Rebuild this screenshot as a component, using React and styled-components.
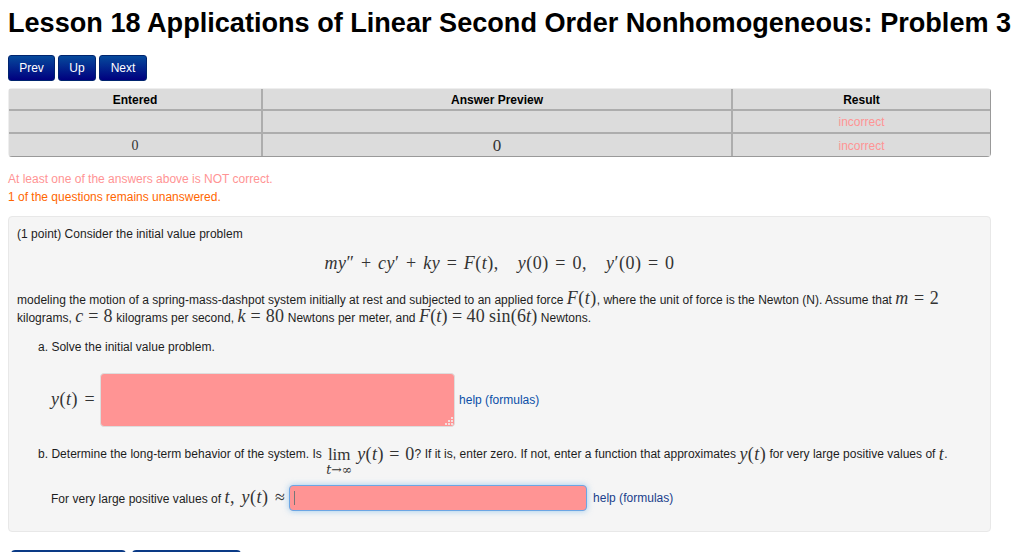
import React from 'react'
import styled, { createGlobalStyle } from 'styled-components'

const GlobalStyle = createGlobalStyle`
  html, body {
    margin: 0;
    padding: 0;
    background: #fff;
    height: 552px;
    overflow: hidden;
  }
  body {
    font-family: "Liberation Sans", Arial, sans-serif;
    font-size: 12px;
    color: #333;
  }
`

const Page = styled.div`
  width: 983px;
  margin-left: 8px;
`

const Title = styled.h1`
  margin: 0;
  padding-top: 7px;
  height: 55px;
  box-sizing: border-box;
  font-size: 27.1px;
  line-height: 32px;
  font-weight: bold;
  color: #000;
  white-space: nowrap;
`

const NavBar = styled.div`
  display: flex;
  gap: 3px;
  height: 33px;
`

const NavButton = styled.a`
  box-sizing: border-box;
  height: 26px;
  width: ${p => p.$w}px;
  display: flex;
  align-items: center;
  justify-content: center;
  border-radius: 3px;
  border: 1px solid #00246e;
  background: linear-gradient(#064a9c, #00007f);
  color: #fff;
  font-size: 12px;
`

const ResultTable = styled.table`
  width: 983px;
  table-layout: fixed;
  border-collapse: separate;
  border-spacing: 0;
  border: 1px solid #eee;
  border-right: 1px solid #999;
  border-bottom: 1px solid #999;
  border-radius: 4px;
  font-size: 12px;
`

const Cell = styled.td`
  height: 23px;
  padding: 1px 0 0 0;
  box-sizing: border-box;
  background: #dcdcdc;
  border: 0 solid #adadad;
  border-width: 0 2px 2px 0;
  text-align: center;
  color: ${p => (p.$bad ? '#ff9494' : '#000')};
  font-weight: ${p => (p.$head ? 'bold' : 'normal')};
  &:last-child { border-right-width: 0; }
  tr:first-child & { height: 22px; }
  tr:last-child & { height: 22px; border-bottom-width: 0; }
`

const SerifZero = styled.span`
  font-family: "Liberation Serif", serif;
  font-size: ${p => p.$size || 14}px;
  color: #333;
`

const Messages = styled.div`
  margin-top: 13px;
  height: 46px;
  line-height: 18px;
`

const Wrong = styled.div`
  color: #ff9494;
`

const Unanswered = styled.div`
  color: #f60;
`

const Problem = styled.div`
  box-sizing: border-box;
  width: 983px;
  height: 316px;
  padding: 8px 8px 0 8px;
  background: #f5f5f5;
  border: 1px solid #e8e8e8;
  border-radius: 4px;
  color: #1d1d1d;
  font-size: 12px;
  line-height: 17px;
  letter-spacing: 0.02px;
`

const DisplayEq = styled.div`
  height: 51px;
  display: flex;
  align-items: center;
  justify-content: center;
  gap: 19px;
`

const Para = styled.div`
  height: ${p => p.$h || 18}px;
  line-height: 18px;
  white-space: nowrap;
`

const Indented = styled.div`
  margin-left: 21px;
  margin-top: ${p => p.$top || 0}px;
  display: flex;
  align-items: center;
  white-space: nowrap;
`

const M = styled.span`
  font-family: "Liberation Serif", "DejaVu Serif", serif;
  font-size: ${p => p.$size || 18}px;
  letter-spacing: ${p => p.$track ?? 0.5}px;
  word-spacing: ${p => p.$word ?? 1.5}px;
  color: #333;
  white-space: nowrap;
`

const I = styled.i`
  font-style: italic;
`

const RowLabel = styled.div`
  margin-left: 13px;
  width: ${p => p.$w}px;
  flex: none;
`

const AnswerArea = styled.textarea`
  box-sizing: border-box;
  width: 355px;
  height: 54px;
  margin: 0;
  padding: 0;
  background: #ff9494;
  border: 1px solid #ddd;
  border-radius: 4px;
  outline: none;
  resize: none;
  display: block;
`

const AnswerWrap = styled.span`
  position: relative;
  display: block;
  margin-right: ${p => p.$gap}px;
`

const Grip = styled.svg`
  position: absolute;
  right: 2px;
  bottom: 2px;
  width: 9px;
  height: 9px;
`

const AnswerInput = styled.input`
  box-sizing: border-box;
  display: block;
  width: 298px;
  height: 26px;
  padding: 0;
  background: #ff9494;
  border: 1px solid #6ba6e4;
  border-radius: 4px;
  outline: none;
  box-shadow: 0 0 6px rgba(102, 175, 233, 0.6);
`

const Caret = styled.span`
  position: absolute;
  left: 5px;
  top: 6px;
  width: 1px;
  height: 14px;
  background: #777;
`

const HelpLink = styled.a`
  color: ${p => (p.$dark ? '#1a3e8c' : '#0b4fa8')};
  font-size: 12px;
`

const Limit = styled.span`
  position: relative;
  display: inline-flex;
  justify-content: center;
  width: 28px;
  margin: 0 4px 0 0;
`

const LimSub = styled.span`
  position: absolute;
  top: 19px;
  font-family: "DejaVu Serif", serif;
  font-size: 12.5px;
  line-height: 10px;
  color: #333;
  white-space: nowrap;
`

const SubmitRow = styled.div`
  display: flex;
  gap: 6px;
  margin: 18px 0 0 3px;
`

const SubmitButton = styled.div`
  width: ${p => p.$w}px;
  height: 26px;
  border-radius: 4px;
  background: #0a3a86;
`

export default function App() {
  return (
    <Page>
      <GlobalStyle />
      <Title>Lesson 18 Applications of Linear Second Order Nonhomogeneous: Problem 3</Title>
      <NavBar>
        <NavButton $w={47}>Prev</NavButton>
        <NavButton $w={38}>Up</NavButton>
        <NavButton $w={48}>Next</NavButton>
      </NavBar>
      <ResultTable>
        <colgroup>
          <col style={{ width: 254 }} />
          <col style={{ width: 470 }} />
          <col />
        </colgroup>
        <tbody>
          <tr>
            <Cell $head>Entered</Cell>
            <Cell $head>Answer Preview</Cell>
            <Cell $head>Result</Cell>
          </tr>
          <tr>
            <Cell />
            <Cell />
            <Cell $bad>incorrect</Cell>
          </tr>
          <tr>
            <Cell><SerifZero>0</SerifZero></Cell>
            <Cell><SerifZero $size={17}>0</SerifZero></Cell>
            <Cell $bad>incorrect</Cell>
          </tr>
        </tbody>
      </ResultTable>
      <Messages>
        <Wrong>At least one of the answers above is NOT correct.</Wrong>
        <Unanswered>1 of the questions remains unanswered.</Unanswered>
      </Messages>
      <Problem>
        <Para $h={13}>(1 point) Consider the initial value problem</Para>
        <DisplayEq>
          <M><I>my</I>″ + <I>cy</I>′ + <I>ky</I> = <I>F</I>(<I>t</I>),</M>
          <M><I>y</I>(0) = 0,</M>
          <M><I>y</I>′(0) = 0</M>
        </DisplayEq>
        <Para>
          modeling the motion of a spring-mass-dashpot system initially at rest and subjected to an applied force <M><I>F</I>(<I>t</I>)</M>, where the unit of force is the Newton (N). Assume that <M $track={0.3} $word={0.5}><I>m</I> = 2</M>
        </Para>
        <Para>
          kilograms, <M $track={0.3} $word={0}><I>c</I> = 8</M> kilograms per second, <M $track={0.3} $word={0}><I>k</I> = 80</M> Newtons per meter, and <M $track={0.2} $word={-0.5}><I>F</I>(<I>t</I>) = 40 sin(6<I>t</I>)</M> Newtons.
        </Para>
        <Indented $top={14}>a. Solve the initial value problem.</Indented>
        <Indented $top={17}>
          <RowLabel $w={49}>
            <M><I>y</I>(<I>t</I>) =</M>
          </RowLabel>
          <AnswerWrap $gap={4}>
            <AnswerArea aria-label="y(t)" />
            <Grip viewBox="0 0 9 9">
              <g fill="#f4dede">
                <rect x="7" y="1" width="2" height="2" />
                <rect x="4" y="4" width="2" height="2" />
                <rect x="7" y="4" width="2" height="2" />
                <rect x="1" y="7" width="2" height="2" />
                <rect x="4" y="7" width="2" height="2" />
                <rect x="7" y="7" width="2" height="2" />
              </g>
            </Grip>
          </AnswerWrap>
          <HelpLink>help (formulas)</HelpLink>
        </Indented>
        <Indented $top={19}>
          b. Determine the long-term behavior of the system. Is&nbsp;
          <Limit>
            <M $size={17} $track={0} $word={0}>lim</M>
            <LimSub><I>t</I>→∞</LimSub>
          </Limit>
          <M $track={0.4} $word={0.5}><I>y</I>(<I>t</I>) = 0</M>? If it is, enter zero. If not, enter a function that approximates&nbsp;<M $track={0.4} $word={0}><I>y</I>(<I>t</I>)</M>&nbsp;for very large positive values of&nbsp;<M><I>t</I></M>.
        </Indented>
        <Indented $top={22}>
          <RowLabel $w={238}>
            For very large positive values of <M><I>t</I>, <I>y</I>(<I>t</I>) ≈</M>
          </RowLabel>
          <AnswerWrap $gap={6}>
            <AnswerInput aria-label="approximation" />
            <Caret />
          </AnswerWrap>
          <HelpLink $dark>help (formulas)</HelpLink>
        </Indented>
      </Problem>
      <SubmitRow>
        <SubmitButton $w={115} />
        <SubmitButton $w={109} />
      </SubmitRow>
    </Page>
  )
}
